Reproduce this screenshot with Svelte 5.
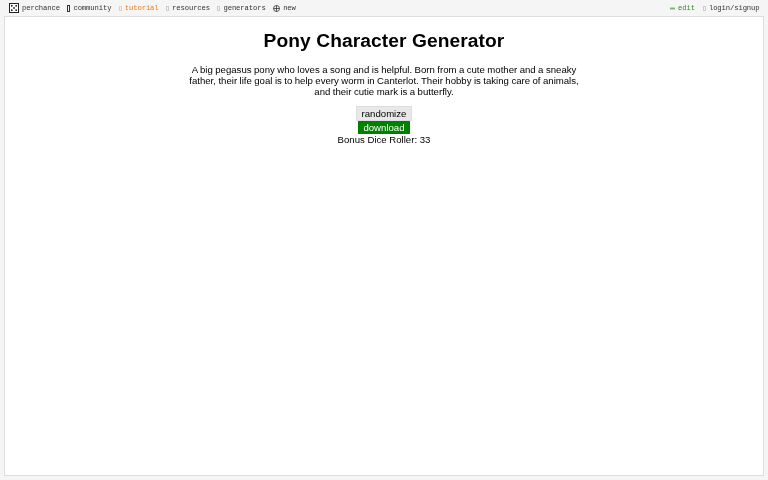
<script>
  const navLeft = [
    { label: 'community', cls: 'dark', tofu: 'tall' },
    { label: 'tutorial', cls: 'orange', tofu: 'small' },
    { label: 'resources', cls: '', tofu: 'small' },
    { label: 'generators', cls: '', tofu: 'small' }
  ];
</script>

<div class="page">
  <nav class="bar">
    <div class="side">
      <span class="item brand">
        <svg class="dice" width="10" height="10" viewBox="0 0 10 10">
          <rect x="0.5" y="0.5" width="9" height="9" fill="#fff" stroke="#222" />
          <rect x="2" y="2" width="1.6" height="1.6" fill="#222" />
          <rect x="6.4" y="2" width="1.6" height="1.6" fill="#222" />
          <rect x="4.2" y="4.2" width="1.6" height="1.6" fill="#222" />
          <rect x="2" y="6.4" width="1.6" height="1.6" fill="#222" />
          <rect x="6.4" y="6.4" width="1.6" height="1.6" fill="#222" />
        </svg>
        <span>perchance</span>
      </span>
      {#each navLeft as n}
        <span class="item {n.cls}"><i class="tofu {n.tofu}"></i>{n.label}</span>
      {/each}
      <span class="item">
        <svg class="globe" width="7" height="7" viewBox="0 0 7 7" fill="none" stroke="#333" stroke-width="0.8">
          <circle cx="3.5" cy="3.5" r="3" />
          <path d="M0.5 3.5H6.5M3.5 0.5V6.5" />
        </svg>
        <span>new</span>
      </span>
    </div>
    <div class="side right">
      <span class="item green"><svg class="pencil" width="5" height="3" viewBox="0 0 5 3"><path d="M0 1.5H5" stroke="#7b7" stroke-width="2" /></svg>edit</span>
      <span class="item login"><i class="tofu small"></i>login/signup</span>
    </div>
  </nav>
  <main class="panel">
    <h1>Pony Character Generator</h1>
    <p>A big pegasus pony who loves a song and is helpful. Born from a cute mother and a sneaky father, their life goal is to help every worm in Canterlot. Their hobby is taking care of animals, and their cutie mark is a butterfly.</p>
    <button class="rand">randomize</button>
    <button class="dl">download</button>
    <div class="bonus">Bonus Dice Roller: 33</div>
  </main>
</div>

<style>
  :global(body) {
    margin: 0;
    background: #f5f5f5;
  }
  .page {
    height: 480px;
    display: flex;
    flex-direction: column;
    box-sizing: border-box;
    padding: 0 4px 4px;
    overflow: hidden;
    will-change: transform;
  }
  .bar {
    height: 16px;
    flex: none;
    display: flex;
    justify-content: space-between;
    align-items: center;
    font-family: "Liberation Mono", monospace;
    font-size: 7.2px;
    letter-spacing: -0.1px;
    color: #333;
    padding: 0 4.5px 0 5px;
  }
  .side {
    display: flex;
    align-items: center;
    gap: 7.5px;
  }
  .side.right { gap: 8px; }
  .item {
    display: inline-flex;
    align-items: center;
    white-space: pre;
  }
  .brand .dice { margin-right: 3px; }
  .orange { color: #e67e22; }
  .green { color: #2a8a2a; }
  .dark { color: #333; }
  .tofu {
    display: inline-block;
    box-sizing: border-box;
    margin-right: 3px;
    border: 1px solid #bbb;
  }
  .tofu.tall {
    width: 3px;
    height: 7px;
    border-color: #333;
  }
  .tofu.small {
    width: 3px;
    height: 5px;
    border-width: 0.75px;
    border-color: #ccc;
  }
  .orange .tofu.small { border-color: #f5cba7; }
  .globe { margin-right: 3px; }
  .pencil { margin-right: 3px; }
  .panel {
    flex: 1;
    background: #fff;
    border: 1px solid #ddd;
    box-sizing: border-box;
    display: flex;
    flex-direction: column;
    align-items: center;
    font-family: "Liberation Sans", Arial, sans-serif;
    font-size: 9.6px;
    color: #000;
  }
  h1 {
    margin: 13px 0 0;
    font-size: 19.2px;
    line-height: 22px;
    font-weight: 700;
    letter-spacing: 0.08px;
  }
  p {
    margin: 12px 0 0;
    width: 400px;
    line-height: 11px;
    text-align: center;
    word-spacing: -0.2px;
  }
  button {
    font-family: inherit;
    font-size: 9.6px;
    border: none;
    padding: 0;
    display: block;
    line-height: 12px;
  }
  .rand {
    margin-top: 9px;
    width: 56px;
    height: 15px;
    background: #e8e8e8;
    border: 1px solid #ddd;
    color: #000;
  }
  .dl {
    margin-top: 0;
    width: 52px;
    height: 13px;
    background: #008000;
    color: #fff;
  }
  .bonus {
    line-height: 11px;
  }
</style>
